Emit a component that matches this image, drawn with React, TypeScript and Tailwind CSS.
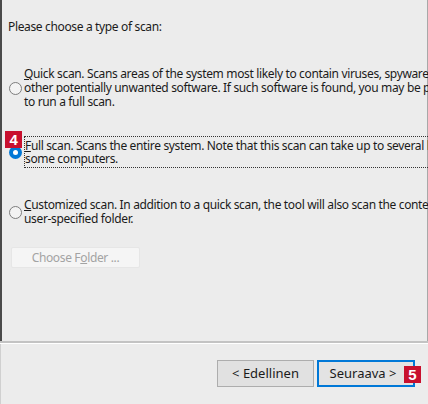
import React from "react";

const font = { fontFamily: '"Noto Sans", "Open Sans", sans-serif' };

function Radio({ checked }: { checked?: boolean }) {
  return checked ? (
    <span className="flex h-[13px] w-[13px] shrink-0 items-center justify-center rounded-full bg-[#0078d7]">
      <span className="h-[5px] w-[5px] rounded-full bg-white" />
    </span>
  ) : (
    <span className="h-[13px] w-[13px] shrink-0 rounded-full border-[1.5px] border-[#7d7d7d] bg-[#f3f3f3]" />
  );
}

function Badge({ n }: { n: string }) {
  return (
    <span className="flex h-[17px] w-[17px] items-center justify-center bg-[#c8102e] text-[15px] font-bold leading-none text-white" style={{ fontFamily: '"Liberation Sans", Arial, sans-serif' }}>
      {n}
    </span>
  );
}

export default function App() {
  return (
    <div className="relative h-[404px] w-[428px] overflow-hidden bg-[#ececec] text-[12px] tracking-[-0.35px] text-[#1b1b1b]" style={font}>
      <div className="flex h-[341px] flex-col border-l-2 border-r border-l-[#4a4a4a] border-r-[#a8a8a8] pl-[6px]">
        <div className="mt-[19px] whitespace-nowrap leading-[16px]">Please choose a type of scan:</div>

        <div className="mt-[32px] flex items-center gap-[2px] pl-[1px]">
          <Radio />
          <div className="whitespace-nowrap leading-[14px]">
            <div><span className="underline">Q</span>uick scan. Scans areas of the system most likely to contain viruses, spyware, and</div>
            <div>other potentially unwanted software. If such software is found, you may be prompted</div>
            <div>to run a full scan.</div>
          </div>
        </div>

        <div className="relative mt-[27px] flex items-center gap-[2px] pl-[1px]">
          <Radio checked />
          <div className="w-[420px] whitespace-nowrap border border-dotted border-[#333] py-[2px] leading-[13px]">
            <div><span className="underline">F</span>ull scan. Scans the entire system. Note that this scan can take up to several hours on</div>
            <div>some computers.</div>
          </div>
          <span className="absolute left-[-3px] top-[-5px]">
            <Badge n="4" />
          </span>
        </div>

        <div className="mt-[30px] flex items-center gap-[2px] pl-[1px]">
          <Radio />
          <div className="whitespace-nowrap leading-[14px]">
            <div><span className="underline">C</span>ustomized scan. In addition to a quick scan, the tool will also scan the contents of a</div>
            <div>user-specified folder.</div>
          </div>
        </div>

        <div className="ml-[3px] mt-[21px] flex h-[21px] w-[129px] items-center justify-center rounded-[2px] border border-[#e6e6e6] bg-[#f5f5f5] text-[#a3a3a3]">
          Choose F<span className="underline">o</span>lder ...
        </div>
      </div>

      <div className="h-[2px] bg-[#c3c3c3]" />
      <div className="h-[1px] bg-white" />

      <div className="flex h-[60px] items-start justify-end border-l border-l-[#d0d0d0] pr-[13px] pt-[16px]">
        <div className="flex h-[27px] w-[97px] items-center justify-center border border-[#adadad] bg-[#e1e1e1] text-[13px] tracking-normal">
          &lt; Edellinen
        </div>
        <div className="relative ml-[3px] flex h-[27px] w-[98px] items-center justify-center border-2 border-[#0078d7] bg-[#e3e3e3] text-[13px] tracking-normal">
          <span className="pr-[6px]">Seuraava &gt;</span>
          <span className="absolute right-[-8px] top-[4px]">
            <Badge n="5" />
          </span>
        </div>
      </div>
      <div className="h-[2px] bg-[#2f4350]" />
    </div>
  );
}
